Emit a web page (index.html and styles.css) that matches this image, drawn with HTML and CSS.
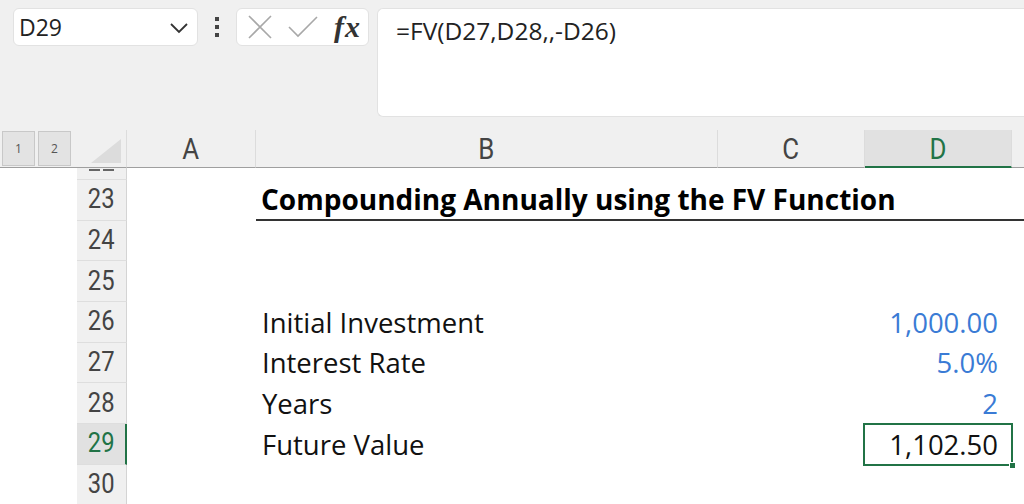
FILE: index.html
```html
<!DOCTYPE html>
<html>
<head>
<meta charset="utf-8">
<link rel="stylesheet" href="styles.css">
</head>
<body>
<div class="toolbar">
  <div class="namebox">
    <span class="name">D29</span>
    <svg class="chev" width="20" height="12" viewBox="0 0 20 12"><path d="M2 2 L10 10 L18 2" fill="none" stroke="#333" stroke-width="1.8"/></svg>
  </div>
  <div class="dots"><i></i><i></i><i></i></div>
  <div class="fbtns">
    <svg width="26" height="26" viewBox="0 0 26 26"><path d="M2 2 L24 24 M24 2 L2 24" stroke="#a8a8a8" stroke-width="1.6" fill="none"/></svg>
    <svg width="30" height="22" viewBox="0 0 30 22"><path d="M1 11 L10 20 L29 1" stroke="#a8a8a8" stroke-width="1.6" fill="none"/></svg>
    <span class="fx">fx</span>
  </div>
  <div class="formula">=FV(D27,D28,,-D26)</div>
</div>
<div class="sheet">
  <div class="hdr outline"><span class="ob">1</span><span class="ob">2</span></div>
  <div class="hdr corner"><svg width="36" height="28" viewBox="0 0 36 28"><path d="M34 2 L34 26 L4 26 Z" fill="#dcdcdc"/></svg></div>
  <div class="hdr col"><span>A</span></div>
  <div class="hdr col"><span>B</span></div>
  <div class="hdr col"><span>C</span></div>
  <div class="hdr col sel"><span>D</span></div>
  <div class="hdr col last"></div>

  <div class="gut r22"></div><div class="rh r22"><i class="stub"></i><i class="stub"></i></div><div class="r22 span5"></div>

  <div class="gut"></div><div class="rh"><span>23</span></div><div class="c"></div><div class="c title span4">Compounding Annually using the FV Function</div>
  <div class="gut"></div><div class="rh"><span>24</span></div><div class="c span5"></div>
  <div class="gut"></div><div class="rh"><span>25</span></div><div class="c span5"></div>
  <div class="gut"></div><div class="rh"><span>26</span></div><div class="c"></div><div class="c lbl">Initial Investment</div><div class="c"></div><div class="c num">1,000.00</div><div class="c"></div>
  <div class="gut"></div><div class="rh"><span>27</span></div><div class="c"></div><div class="c lbl">Interest Rate</div><div class="c"></div><div class="c num">5.0%</div><div class="c"></div>
  <div class="gut"></div><div class="rh"><span>28</span></div><div class="c"></div><div class="c lbl">Years</div><div class="c"></div><div class="c num">2</div><div class="c"></div>
  <div class="gut"></div><div class="rh selrow"><span>29</span></div><div class="c"></div><div class="c lbl">Future Value</div><div class="c"></div><div class="c num active">1,102.50<i class="handle"></i></div><div class="c"></div>
  <div class="gut"></div><div class="rh"><span>30</span></div><div class="c span5"></div>
</div>
</body>
</html>
```
FILE: styles.css
```css
* { box-sizing: border-box; }
html, body { margin: 0; padding: 0; background: #fff; overflow: hidden; }
body { width: 1024px; height: 504px; font-family: "Open Sans", "Noto Sans", sans-serif; }

.toolbar {
  height: 130px;
  background: #f0f0f0;
  display: flex;
  align-items: flex-start;
  padding: 8px 0 0 13px;
}
.namebox {
  width: 185px; height: 38px;
  background: #fff;
  border: 1px solid #e2e2e2;
  border-radius: 6px;
  display: flex; align-items: center; justify-content: space-between;
  padding: 0 8px 0 5px;
}
.name { font-size: 23px; color: #222; line-height: 1; }
.chev { margin-top: 2px; }
.dots {
  width: 38px; height: 38px;
  display: flex; flex-direction: column; align-items: center; justify-content: center; gap: 4px;
}
.dots i { display: block; width: 4px; height: 4px; background: #444; }
.fbtns {
  width: 133px; height: 38px;
  background: #fff;
  border: 1px solid #e2e2e2;
  border-radius: 6px;
  display: flex; align-items: center;
  padding: 0 0 0 10px; gap: 15px;
}
.fx {
  font-family: "Liberation Serif", "DejaVu Serif", serif;
  font-style: italic; font-weight: bold;
  font-size: 30px; color: #333; margin-left: 1px; letter-spacing: 1px; line-height: 1;
}
.formula {
  margin-left: 8px;
  flex: 1;
  height: 109px;
  background: #fff;
  border: 1px solid #e2e2e2;
  border-right: none;
  border-radius: 6px 0 0 6px;
  padding: 5px 0 0 18px;
  font-size: 24.5px; color: #222;
}

.sheet {
  display: grid;
  grid-template-columns: 77px 50px 129px 462px 147px 147px 1fr;
  grid-template-rows: 38px 12px repeat(8, 40.67px);
}
.hdr {
  background: #f0f0f0;
  border-bottom: 1px solid #9f9f9f;
}
.outline { display: flex; gap: 3px; padding: 1px 0 0 2px; background: #f0f0f0; }
.ob {
  width: 33px; height: 35px;
  background: #e3e3e3;
  border: 1px solid #c8c8c8;
  font-family: "Open Sans", sans-serif;
  font-size: 12px; color: #555;
  display: flex; align-items: center; justify-content: center;
}
.corner { display: flex; align-items: flex-end; justify-content: flex-end; padding: 0 3px 2px 0; border-right: 1px solid #dcdcdc; }
.corner svg { display: block; }
.col {
  border-right: 1px solid #dcdcdc;
  display: flex; align-items: center; justify-content: center;
  font-family: Roboto, "Liberation Sans", sans-serif;
  font-size: 30px; color: #444;
}
.col span { display: inline-block; transform: scaleX(0.86); }
.col.last { border-right: none; }
.col.sel { background: #e1e1e1; color: #217346; border-bottom: 2px solid #217346; }

.gut { background: #fff; }
.rh {
  background: #f0f0f0;
  border-right: 1px solid #d4d4d4;
  border-bottom: 1px solid #dedede;
  display: flex; align-items: center; justify-content: center;
  font-family: Roboto, "Liberation Sans", sans-serif;
  font-size: 27px; color: #444;
  overflow: hidden;
}
.rh span { display: inline-block; transform: scaleX(0.88); line-height: 1; }
.rh.r22 { align-items: flex-start; gap: 3px; padding-top: 1px; }
.stub { display: block; width: 11px; height: 2px; background: #666; }
.rh.selrow { background: #e1e1e1; color: #217346; border-right: 2px solid #217346; }
.span5 { grid-column: span 5; }
.span4 { grid-column: span 4; }

.c {
  display: flex; align-items: center;
  font-size: 27.5px; color: #111;
  white-space: nowrap;
}
.lbl { padding-left: 6px; }
.title {
  font-weight: bold; font-size: 28px; color: #000;
  padding-left: 5px;
  border-bottom: 2px solid #333;
}
.num { justify-content: flex-end; padding-right: 14px; color: #3a7bd5; }
.active {
  position: relative;
  color: #111;
  border: 2px solid #217346;
  margin: -1px -1px -1px -2px;
  padding-right: 13px;
}
.handle {
  position: absolute; right: -5px; bottom: -5px;
  width: 7px; height: 7px;
  background: #217346; border: 1px solid #fff;
}
```
